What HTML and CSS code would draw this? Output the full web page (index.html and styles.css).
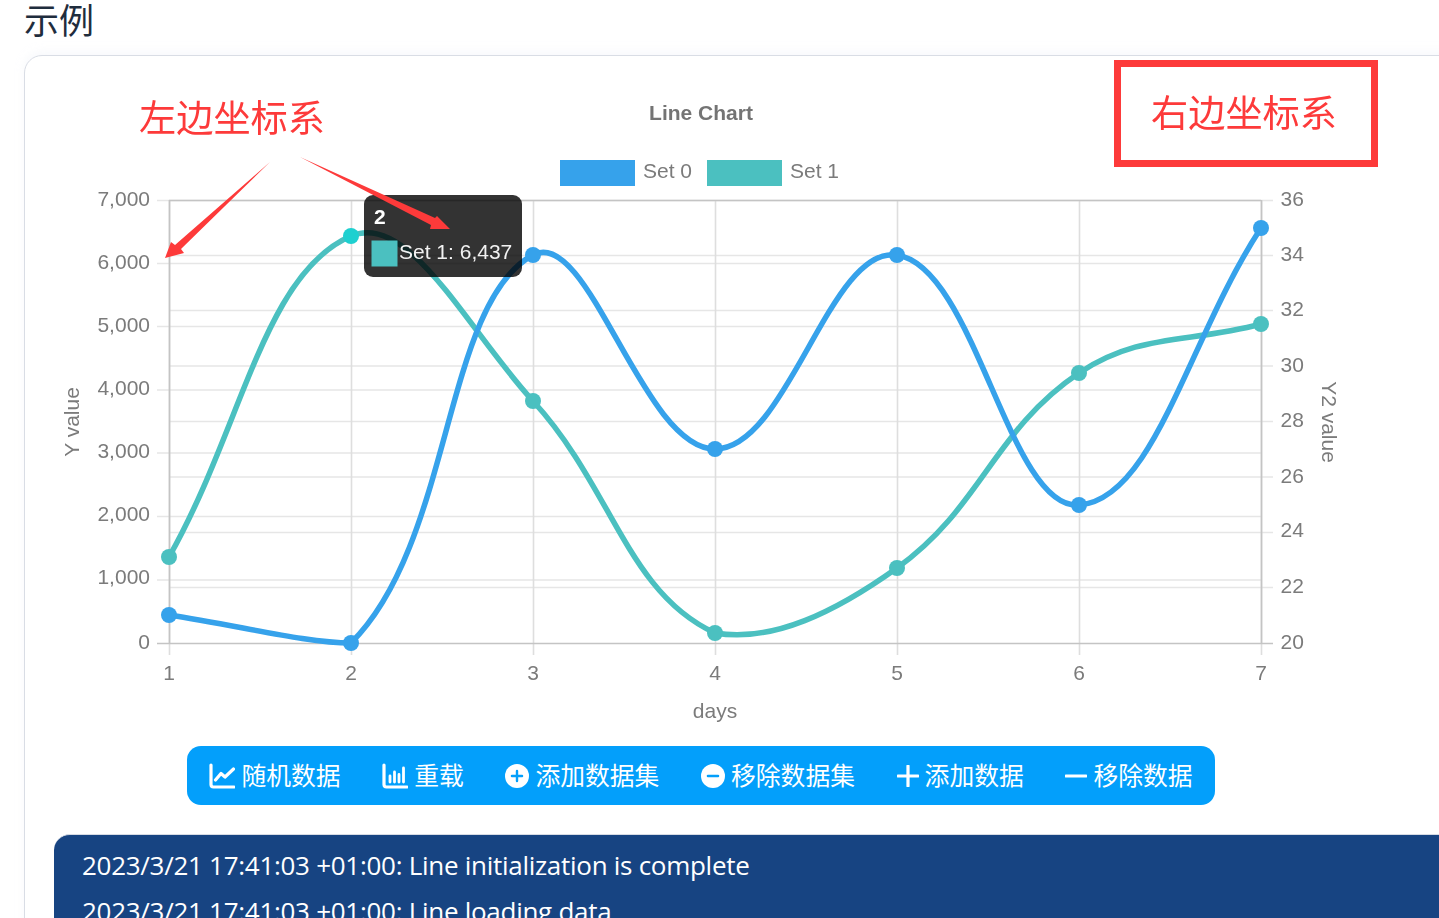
FILE: index.html
```html
<!DOCTYPE html>
<html lang="zh-CN">
<head>
<meta charset="utf-8">
<title>示例</title>
<link rel="stylesheet" href="styles.css">
</head>
<body>
<main class="page">
  <h2 class="page-title">示例</h2>
  <section class="card">
    <svg class="chart" viewBox="54 56 1385 674" width="1385" height="674" xmlns="http://www.w3.org/2000/svg">
      <text class="chart-title" x="701" y="120" text-anchor="middle">Line Chart</text>

      <rect class="set0-fill" x="560" y="160" width="75" height="26"/>
      <text class="tick" x="643" y="178">Set 0</text>
      <rect class="set1-fill" x="707" y="160" width="75" height="26"/>
      <text class="tick" x="790" y="178">Set 1</text>

      <g class="grid">
        <path d="M157 200.500H1261M157 263.500H1261M157 326.500H1261M157 390H1261M157 453H1261M157 516.500H1261M157 580H1261"/>
        <path d="M169 255.500H1273M169 310.500H1273M169 366H1273M169 421.500H1273M169 477H1273M169 532.500H1273M169 587.500H1273"/>
        <path class="grid-v" d="M169.500 200V655M351.500 200V655M533.500 200V655M715.500 200V655M897.500 200V655M1079.500 200V655M1261.500 200V655"/>
        <path d="M1261 200.500H1273"/>
      </g>
      <g class="axis">
        <path d="M157 643.500H1273M169.500 200V643M1261.500 200V643M169 200.500H1261"/>
      </g>

      <g class="tick" text-anchor="end">
        <text x="150" y="206">7,000</text>
        <text x="150" y="269">6,000</text>
        <text x="150" y="332">5,000</text>
        <text x="150" y="395">4,000</text>
        <text x="150" y="458">3,000</text>
        <text x="150" y="521">2,000</text>
        <text x="150" y="584">1,000</text>
        <text x="150" y="649">0</text>
      </g>
      <g class="tick">
        <text x="1280.500" y="206">36</text>
        <text x="1280.500" y="261">34</text>
        <text x="1280.500" y="316">32</text>
        <text x="1280.500" y="372">30</text>
        <text x="1280.500" y="427">28</text>
        <text x="1280.500" y="483">26</text>
        <text x="1280.500" y="537">24</text>
        <text x="1280.500" y="593">22</text>
        <text x="1280.500" y="649">20</text>
      </g>
      <g class="tick" text-anchor="middle">
        <text x="169" y="680">1</text>
        <text x="351" y="680">2</text>
        <text x="533" y="680">3</text>
        <text x="715" y="680">4</text>
        <text x="897" y="680">5</text>
        <text x="1079" y="680">6</text>
        <text x="1261" y="680">7</text>
        <text x="715" y="718">days</text>
        <text transform="translate(79 422) rotate(-90)">Y value</text>
        <text transform="translate(1322 422) rotate(90)">Y2 value</text>
      </g>

      <path class="line set1-line" d="M169 557C241.800 428.600 263.600 273.500 351 236C409.200 211.100 466.800 328.800 533 401C612.400 487.600 627.100 592.700 715 633C772.700 643 835.800 611.700 897 568C981.400 507.700 993.700 430.200 1079 373C1139.300 332.600 1188.200 343.600 1261 324"/>
      <path class="line set0-line" d="M169 615C241.800 626.200 307.200 643 351 643C452.800 542.300 443.200 302.900 533 255C588.800 225.300 642.200 449 715 449C787.800 449 829.700 244.600 897 255C975.300 267 1008.700 510.200 1079 505C1154.300 499.400 1188.200 338.800 1261 228"/>

      <g class="set1-fill">
        <circle cx="169" cy="557" r="8"/>
        <circle cx="533" cy="401" r="8"/>
        <circle cx="715" cy="633" r="8"/>
        <circle cx="897" cy="568" r="8"/>
        <circle cx="1079" cy="373" r="8"/>
        <circle cx="1261" cy="324" r="8"/>
      </g>
      <circle class="hover-point" cx="351" cy="236" r="8"/>
      <g class="set0-fill">
        <circle cx="169" cy="615" r="8"/>
        <circle cx="351" cy="643" r="8"/>
        <circle cx="533" cy="255" r="8"/>
        <circle cx="715" cy="449" r="8"/>
        <circle cx="897" cy="255" r="8"/>
        <circle cx="1079" cy="505" r="8"/>
        <circle cx="1261" cy="228" r="8"/>
      </g>

      <rect class="tooltip-bg" x="364" y="195" width="158" height="82" rx="9"/>
      <text class="tooltip-title" x="374" y="224">2</text>
      <rect class="tooltip-swatch" x="372" y="241" width="25" height="25"/>
      <text class="tooltip-text" x="399" y="259">Set 1: 6,437</text>

      <text class="note" x="139" y="132">左边坐标系</text>
      <polygon class="note-mark" points="270,162 181,249 184,253 165,258 171,242 175,245"/>
      <polygon class="note-mark" points="300,157 435,218 437,216 450,229 430,229 431,225"/>
      <rect class="note-box" x="1117.500" y="63.500" width="257" height="100"/>
      <text class="note" x="1151" y="127">右边坐标系</text>
    </svg>

    <div class="toolbar-row">
      <div class="toolbar">
        <button class="tool" type="button">
          <svg class="icon" viewBox="0 0 26 26"><path class="icon-stroke" d="M2 2V21.500Q2 24 4.500 24H25M6.500 17L12 10.500L16 14L24.500 6"/></svg>
          <span>随机数据</span>
        </button>
        <button class="tool" type="button">
          <svg class="icon" viewBox="0 0 26 26"><path class="icon-stroke" d="M2 2V21.500Q2 24 4.500 24H25"/><path class="icon-stroke icon-thin" d="M8 19V13M12.500 19V9M17 19V11.500M21.500 19V5"/></svg>
          <span>重载</span>
        </button>
        <button class="tool" type="button">
          <svg class="icon icon-circle" viewBox="0 0 26 26"><circle class="icon-fill" cx="13" cy="13" r="13"/><path class="icon-cut" d="M7.500 13H18.500M13 7.500V18.500"/></svg>
          <span>添加数据集</span>
        </button>
        <button class="tool" type="button">
          <svg class="icon icon-circle" viewBox="0 0 26 26"><circle class="icon-fill" cx="13" cy="13" r="13"/><path class="icon-cut" d="M7.500 13H18.500"/></svg>
          <span>移除数据集</span>
        </button>
        <button class="tool" type="button">
          <svg class="icon icon-small" viewBox="0 0 22 22"><path class="icon-stroke" d="M1 11H21M11 1V21"/></svg>
          <span>添加数据</span>
        </button>
        <button class="tool" type="button">
          <svg class="icon icon-small" viewBox="0 0 22 22"><path class="icon-stroke" d="M1 11H21"/></svg>
          <span>移除数据</span>
        </button>
      </div>
    </div>

    <div class="log">
      <p>2023/3/21 17:41:03 +01:00: Line initialization is complete</p>
      <p>2023/3/21 17:41:03 +01:00: Line loading data</p>
    </div>
  </section>
</main>
</body>
</html>
```

FILE: styles.css
```css
* {
  box-sizing: border-box;
}

html,
body {
  margin: 0;
  height: 100%;
  overflow: hidden;
  background: #fff;
}

.page {
  padding-left: 24px;
  width: 1500px;
  font-family: "Noto Sans CJK SC", "Noto Sans", sans-serif;
}

.page-title {
  margin: 0;
  height: 55px;
  font-size: 35px;
  line-height: 38px;
  font-weight: 400;
  color: #1f2d3d;
}

.card {
  padding-left: 29px;
  border: 1px solid #d9dde5;
  border-top-left-radius: 18px;
  background: #fff;
  box-shadow: 0 -4px 8px rgba(235, 238, 245, 0.35);
}

.chart {
  display: block;
  filter: blur(0.35px);
}

.chart-title {
  font: bold 21px "Liberation Sans", Arial, sans-serif;
  fill: #747474;
}

.tick,
.tick text {
  font: 21px "Liberation Sans", Arial, sans-serif;
  fill: #7b7b7b;
}

.grid path {
  fill: none;
  stroke: #e6e6e6;
  stroke-width: 1.600;
}

.grid .grid-v {
  stroke: #dedede;
}

.axis path {
  fill: none;
  stroke: #c4c4c4;
  stroke-width: 1.600;
}

.line {
  fill: none;
  stroke-width: 5.500px;
}

.set0-line {
  stroke: #36a2eb;
}

.set1-line {
  stroke: #4bc0c0;
}

.set0-fill {
  fill: #36a2eb;
}

.set1-fill {
  fill: #4bc0c0;
}

.hover-point {
  fill: #1ed0d0;
}

.tooltip-bg {
  fill: rgba(0, 0, 0, 0.8);
}

.tooltip-title {
  font: bold 21px "Liberation Sans", Arial, sans-serif;
  fill: #fff;
}

.tooltip-text {
  font: 21px "Liberation Sans", Arial, sans-serif;
  fill: #f2f2f2;
}

.tooltip-swatch {
  fill: #4bc0c0;
  stroke: #4bc0c0;
}

.note {
  font: 400 37.200px "Noto Sans CJK SC", sans-serif;
  fill: #fd3a3a;
}

.note-mark {
  fill: #fd3a3a;
}

.note-box {
  fill: none;
  stroke: #fd3a3a;
  stroke-width: 7px;
}

.toolbar-row {
  display: flex;
  justify-content: center;
  width: 1294px;
  margin-top: 16px;
}

.toolbar {
  display: flex;
  align-items: center;
  height: 59px;
  padding: 0 22px;
  gap: 41.600px;
  border-radius: 14px;
  background: #039ffb;
}

.tool {
  display: flex;
  align-items: center;
  gap: 6px;
  padding: 0;
  border: 0;
  background: none;
  color: #fff;
  font: 24.800px/34px "Noto Sans CJK SC", sans-serif;
  white-space: nowrap;
}

.tool span {
  padding-bottom: 4px;
}

.icon {
  display: block;
  width: 26px;
  height: 26px;
}

.icon-circle {
  width: 24px;
  height: 24px;
}

.icon-small {
  width: 22px;
  height: 22px;
}

.icon-stroke {
  fill: none;
  stroke: #fff;
  stroke-width: 3.200;
  stroke-linecap: round;
  stroke-linejoin: round;
}

.icon-thin {
  stroke-width: 2.800;
}

.icon-fill {
  fill: #fff;
}

.icon-cut {
  fill: none;
  stroke: #039ffb;
  stroke-width: 2.600;
  stroke-linecap: round;
}

.log {
  margin-top: 29px;
  padding: 7px 28px;
  min-height: 120px;
  border-top: 1px solid #d6dbe4;
  border-top-left-radius: 16px;
  background: #174482;
  color: #fff;
  font: 26px/46px "Open Sans", "Noto Sans", sans-serif;
  letter-spacing: -0.280px;
}

.log p {
  margin: 0;
}
```
